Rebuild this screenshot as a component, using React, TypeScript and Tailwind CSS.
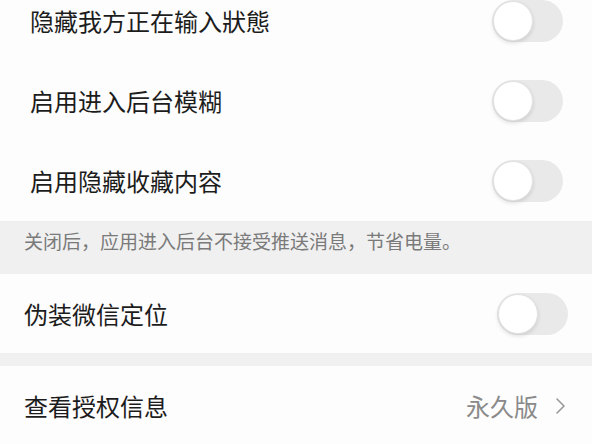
import React from "react";

const font = { fontFamily: '"Noto Sans CJK SC", "Noto Sans", sans-serif' };

function Toggle() {
  return (
    <div className="relative h-[42px] w-[71px] shrink-0 rounded-full bg-[#e9e9e9]">
      <div className="absolute left-[1px] top-[1px] h-[40px] w-[40px] rounded-full border border-[#e2e2e2] bg-white shadow-[0_2px_4px_rgba(0,0,0,0.12)]" />
    </div>
  );
}

function ToggleRow({ label }: { label: string }) {
  return (
    <div className="flex h-[80px] items-center justify-between">
      <span className="text-[24px] leading-none text-[#1c1c1c]">{label}</span>
      <Toggle />
    </div>
  );
}

export default function App() {
  return (
    <div className="h-[444px] w-[592px] overflow-hidden bg-[#fdfdfd]" style={font}>
      <div className="-mt-[19px] pl-[30px] pr-[29px]">
        <ToggleRow label="隐藏我方正在输入狀態" />
        <ToggleRow label="启用进入后台模糊" />
        <ToggleRow label="启用隐藏收藏内容" />
      </div>

      <div className="h-[53px] bg-[#f0f0f0] pl-[24px] pt-[6px]">
        <p className="text-[19px] leading-[28px] text-[#7a7a7a]">
          关闭后，应用进入后台不接受推送消息，节省电量。
        </p>
      </div>

      <div className="pl-[24px] pr-[24px]">
        <div className="flex h-[79px] items-center justify-between">
          <span className="text-[24px] leading-none text-[#1c1c1c]">伪装微信定位</span>
          <Toggle />
        </div>
      </div>

      <div className="h-[13px] bg-[#f0f0f0]" />

      <div className="flex h-[80px] items-center justify-between pl-[24px] pr-[27px]">
        <span className="text-[24px] leading-none text-[#1c1c1c]">查看授权信息</span>
        <div className="flex items-center gap-[18px]">
          <span className="text-[24px] leading-none text-[#8a8a8a]">永久版</span>
          <svg width="9" height="16" viewBox="0 0 9 16" fill="none">
            <path d="M1 1l7 7-7 7" stroke="#9a9a9a" strokeWidth="1.6" strokeLinecap="round" strokeLinejoin="round" />
          </svg>
        </div>
      </div>
    </div>
  );
}
